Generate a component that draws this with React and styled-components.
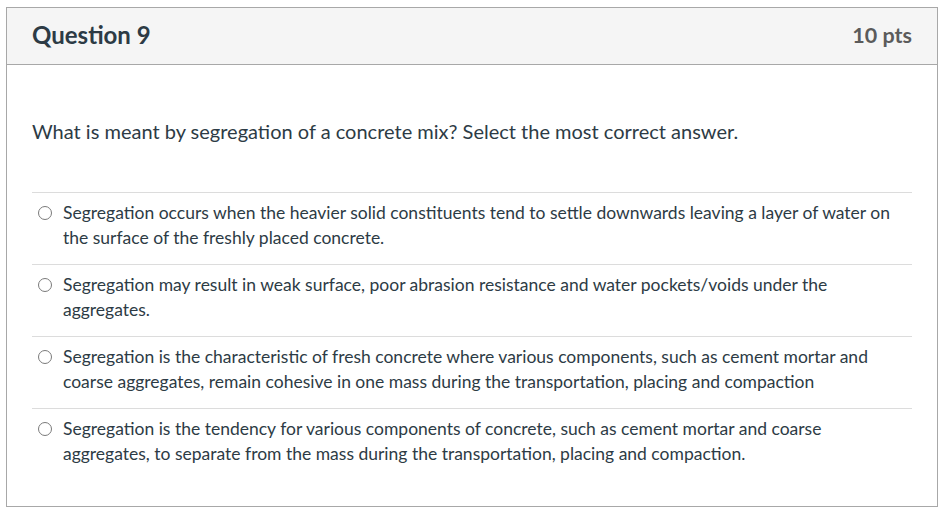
import React from "react";
import styled, { createGlobalStyle } from "styled-components";

const GlobalStyle = createGlobalStyle`
  body {
    margin: 0;
    background: #ffffff;
    font-family: Lato, "Liberation Sans", sans-serif;
    color: #2d3b45;
  }
`;

const Page = styled.div`
  padding: 7px 9px 13px 6px;
`;

const Card = styled.div`
  border: 1px solid #a8a8a8;
  background: #ffffff;
  height: 500px;
  box-sizing: border-box;
`;

const Header = styled.div`
  display: flex;
  align-items: center;
  justify-content: space-between;
  height: 57px;
  padding: 0 25px 3px 25px;
  box-sizing: border-box;
  background: #f5f5f5;
  border-bottom: 1px solid #a8a8a8;
`;

const Title = styled.h2`
  margin: 0;
  font-size: 24px;
  font-weight: 700;
  color: #2d3b45;
`;

const Points = styled.span`
  font-size: 21.5px;
  font-weight: 700;
  color: #5b5b5b;
`;

const Body = styled.div`
  padding: 52px 25px 0 25px;
`;

const Prompt = styled.p`
  margin: 0 0 47px 0;
  font-size: 20px;
  line-height: 28px;
  color: #2d3b45;
`;

const Answers = styled.div`
  display: flex;
  flex-direction: column;
`;

const Answer = styled.label`
  display: flex;
  align-items: flex-start;
  gap: 11px;
  padding: 7px 12px 14px 6px;
  border-top: 1px solid #dcdcdc;
  font-size: 17.5px;
  line-height: 25px;
  color: #2d3b45;
  cursor: pointer;
`;

const Radio = styled.span`
  flex: none;
  width: 14px;
  height: 14px;
  margin-top: 6px;
  border: 1px solid #7a7a7a;
  border-radius: 50%;
  background: #ffffff;
  box-sizing: border-box;
`;

const answers = [
  "Segregation occurs when the heavier solid constituents tend to settle downwards leaving a layer of water on the surface of the freshly placed concrete.",
  "Segregation may result in weak surface, poor abrasion resistance and water pockets/voids under the aggregates.",
  "Segregation is the characteristic of fresh concrete where various components, such as cement mortar and coarse aggregates, remain cohesive in one mass during the transportation, placing and compaction",
  "Segregation is the tendency for various components of concrete, such as cement mortar and coarse aggregates, to separate from the mass during the transportation, placing and compaction.",
];

const App = () => {
  return (
    <Page>
      <GlobalStyle />
      <Card>
        <Header>
          <Title>Question 9</Title>
          <Points>10 pts</Points>
        </Header>
        <Body>
          <Prompt>
            What is meant by segregation of a concrete mix? Select the most correct answer.
          </Prompt>
          <Answers>
            {answers.map((text, index) => (
              <Answer key={index}>
                <Radio />
                <span>{text}</span>
              </Answer>
            ))}
          </Answers>
        </Body>
      </Card>
    </Page>
  );
};

export default App;
